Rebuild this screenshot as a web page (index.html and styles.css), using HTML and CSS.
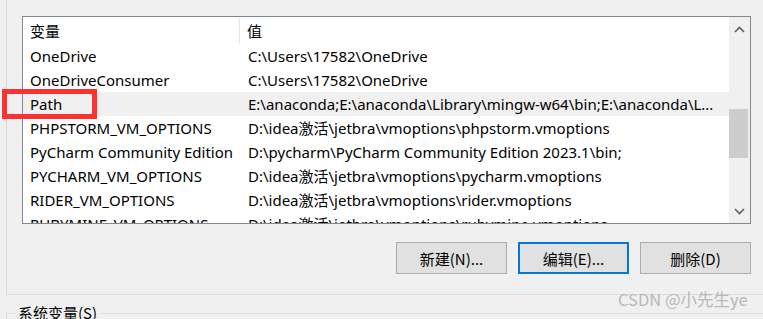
FILE: index.html
```html
<!DOCTYPE html>
<html lang="zh-CN">
<head>
<meta charset="utf-8">
<link rel="stylesheet" href="styles.css">
</head>
<body>
<div class="page">
  <div class="group user">
    <span class="legend">17582 的用户变量(U)</span>
    <div class="listbox">
      <div class="list">
        <div class="header">
          <div class="hcell name">变量</div>
          <div class="hcell value">值</div>
        </div>
        <div class="row"><div class="cell name">OneDrive</div><div class="cell value">C:\Users\17582\OneDrive</div></div>
        <div class="row"><div class="cell name">OneDriveConsumer</div><div class="cell value">C:\Users\17582\OneDrive</div></div>
        <div class="row selected"><div class="cell name">Path</div><div class="cell value">E:\anaconda;E:\anaconda\Library\mingw-w64\bin;E:\anaconda\L...</div></div>
        <div class="row"><div class="cell name">PHPSTORM_VM_OPTIONS</div><div class="cell value">D:\idea激活\jetbra\vmoptions\phpstorm.vmoptions</div></div>
        <div class="row"><div class="cell name">PyCharm Community Edition</div><div class="cell value">D:\pycharm\PyCharm Community Edition 2023.1\bin;</div></div>
        <div class="row"><div class="cell name">PYCHARM_VM_OPTIONS</div><div class="cell value">D:\idea激活\jetbra\vmoptions\pycharm.vmoptions</div></div>
        <div class="row"><div class="cell name">RIDER_VM_OPTIONS</div><div class="cell value">D:\idea激活\jetbra\vmoptions\rider.vmoptions</div></div>
        <div class="row"><div class="cell name">RUBYMINE_VM_OPTIONS</div><div class="cell value">D:\idea激活\jetbra\vmoptions\rubymine.vmoptions</div></div>
      </div>
      <div class="scrollbar">
        <div class="arrow up"><svg width="11" height="7" viewBox="0 0 11 7"><path d="M1 6 L5.5 1.5 L10 6" fill="none" stroke="#606060" stroke-width="1.6"/></svg></div>
        <div class="track"><div class="thumb"></div></div>
        <div class="arrow down"><svg width="11" height="7" viewBox="0 0 11 7"><path d="M1 1 L5.5 5.5 L10 1" fill="none" stroke="#606060" stroke-width="1.6"/></svg></div>
      </div>
    </div>
    <div class="buttons">
      <button class="btn">新建(N)...</button>
      <button class="btn focused">编辑(E)...</button>
      <button class="btn">删除(D)</button>
    </div>
  </div>
  <div class="group system">
    <span class="legend">系统变量(S)</span>
  </div>
  <div class="highlight"></div>
  <div class="watermark">CSDN @小先生ye</div>
</div>
</body>
</html>
```

FILE: styles.css
```css
* { box-sizing: border-box; }
html, body { margin: 0; padding: 0; }
body {
  background: #f0f0f0;
  font-family: "Noto Sans", "Noto Sans CJK SC", sans-serif;
  font-size: 15px;
  color: #000;
}
.page {
  position: relative;
  width: 763px;
  height: 319px;
  overflow: hidden;
}
.group {
  position: relative;
  margin-left: 6px;
  border: 1px solid #dcdcdc;
  border-right: none;
}
.group.user {
  margin-top: -10px;
  height: 305px;
  padding: 25px 0 0 15px;
}
.group.system {
  margin-top: 18px;
  height: 40px;
}
.legend {
  position: absolute;
  left: 8px;
  top: -11px;
  padding: 0 3px;
  background: #f0f0f0;
  font-size: 15px;
  line-height: 20px;
  font-family: "Noto Sans CJK SC", sans-serif;
}
.group.user .legend { top: -13px; }
.listbox {
  display: flex;
  width: 729px;
  height: 208px;
  border: 1px solid #828790;
  background: #fff;
}
.list {
  flex: 1;
  overflow: hidden;
}
.header, .row {
  display: grid;
  grid-template-columns: 217px 1fr;
  white-space: nowrap;
}
.header { height: 27px; align-items: center; }
.hcell { padding-left: 7px; line-height: 26px; }
.hcell.name { border-right: 1px solid #e5e5e5; }
.row { height: 24px; line-height: 24px; }
.row.selected { background: #f0f0f0; }
.cell { padding-left: 7px; overflow: hidden; }
.cell.value { padding-left: 8px; }
.scrollbar {
  width: 21px;
  background: #f0f0f0;
  display: flex;
  flex-direction: column;
}
.arrow {
  height: 24px;
  display: flex;
  align-items: center;
  justify-content: center;
}
.arrow.up { height: 25px; }
.track {
  flex: 1;
  padding-top: 67px;
}
.thumb {
  height: 49px;
  width: 19px;
  background: #cdcdcd;
}
.buttons {
  display: flex;
  gap: 11px;
  margin-top: 18px;
  padding-left: 374px;
}
.btn {
  width: 111px;
  height: 32px;
  background: #e1e1e1;
  border: 1px solid #adadad;
  font-family: "Noto Sans CJK SC", sans-serif;
  font-size: 15px;
  color: #000;
  padding: 0;
}
.btn.focused { border: 2px solid #0078d7; }
.highlight {
  position: absolute;
  left: 2px;
  top: 89px;
  width: 95px;
  height: 30px;
  border: 5px solid #fa3232;
}
.watermark {
  position: absolute;
  left: 618px;
  top: 288px;
  font-size: 16.5px;
  line-height: 22px;
  color: #b8b8b8;
  font-family: "Noto Sans CJK SC", sans-serif;
}
```
